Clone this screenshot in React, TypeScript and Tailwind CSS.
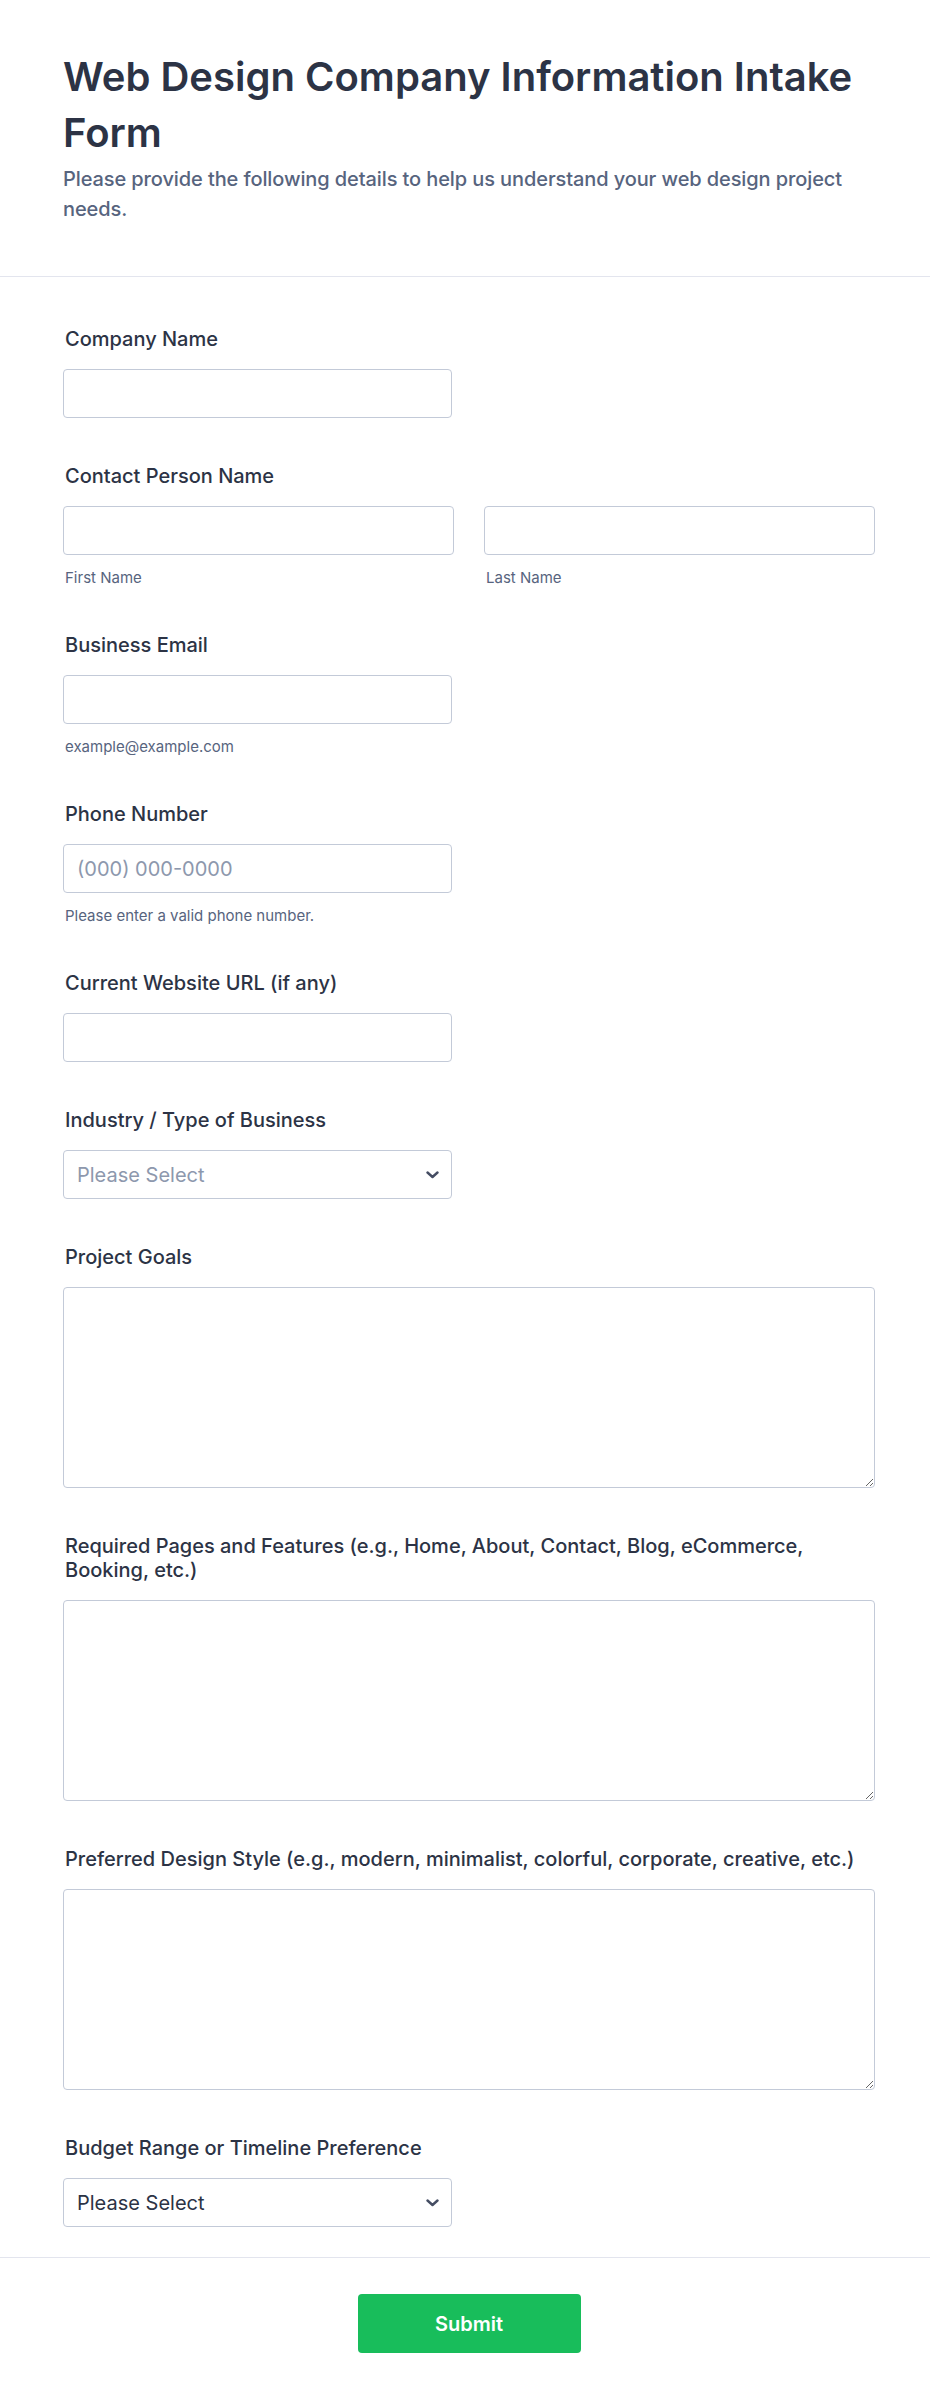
type FieldProps = {
  label: string;
  children: React.ReactNode;
};

const inputClass =
  "block h-[49px] rounded-[4px] border border-[#c3cad8] bg-white px-[13px] text-[20px] text-[#2c3345] outline-none placeholder:text-[#8d98ad]";

const Field = ({ label, children }: FieldProps) => (
  <div className="flex flex-col">
    <label className="pl-[2px] text-[20px] font-medium leading-6 text-[#2c3345]">
      {label}
    </label>
    <div className="mt-[18px]">{children}</div>
  </div>
);

const Sublabel = ({ children }: { children: React.ReactNode }) => (
  <span className="mt-[14px] block pl-[2px] text-[15px] leading-[18px] text-[#57647e]">
    {children}
  </span>
);

const Chevron = () => (
  <svg
    className="pointer-events-none absolute right-[13px] top-1/2 -translate-y-1/2"
    width="13"
    height="8"
    viewBox="0 0 13 8"
    fill="none"
  >
    <path
      d="M1.5 1.5l5 4.5 5-4.5"
      stroke="#454d63"
      strokeWidth="2.4"
      strokeLinecap="round"
      strokeLinejoin="round"
    />
  </svg>
);

const Dropdown = ({ muted }: { muted?: boolean }) => (
  <div className="relative w-[389px]">
    <select
      defaultValue=""
      className={
        "block h-[49px] w-full appearance-none rounded-[4px] border border-[#c3cad8] bg-white px-[13px] text-[20px] outline-none " +
        (muted ? "text-[#8d98ad]" : "text-[#2c3345]")
      }
    >
      <option value="">Please Select</option>
    </select>
    <Chevron />
  </div>
);

const TextArea = () => (
  <textarea className="block h-[201px] w-full rounded-[4px] border border-[#c3cad8] bg-white px-[13px] py-[10px] text-[20px] text-[#2c3345] outline-none" />
);

export default function App() {
  return (
    <div className="min-h-screen bg-white font-['Inter',sans-serif] antialiased">
      <header className="border-b border-[#e3e5ee] pb-[52px] pl-[63px] pr-[55px] pt-[49px]">
        <h1 className="text-[40px] font-semibold leading-[56px] text-[#2c3345]">
          Web Design Company Information Intake Form
        </h1>
        <p className="mt-[3px] text-[20px] font-medium leading-[30px] tracking-[-0.1px] text-[#57647e]">
          Please provide the following details to help us understand your web
          design project needs.
        </p>
      </header>

      <form className="flex flex-col gap-[46px] border-b border-[#e3e5ee] pb-[30px] pl-[63px] pr-[55px] pt-[50px]">
        <Field label="Company Name">
          <input type="text" className={inputClass + " w-[389px]"} />
        </Field>

        <Field label="Contact Person Name">
          <div className="grid grid-cols-2 gap-[30px]">
            <div>
              <input type="text" className={inputClass + " w-full"} />
              <Sublabel>First Name</Sublabel>
            </div>
            <div>
              <input type="text" className={inputClass + " w-full"} />
              <Sublabel>Last Name</Sublabel>
            </div>
          </div>
        </Field>

        <Field label="Business Email">
          <input type="email" className={inputClass + " w-[389px]"} />
          <Sublabel>example@example.com</Sublabel>
        </Field>

        <Field label="Phone Number">
          <input
            type="tel"
            placeholder="(000) 000-0000"
            className={inputClass + " w-[389px]"}
          />
          <Sublabel>Please enter a valid phone number.</Sublabel>
        </Field>

        <Field label="Current Website URL (if any)">
          <input type="url" className={inputClass + " w-[389px]"} />
        </Field>

        <Field label="Industry / Type of Business">
          <Dropdown muted />
        </Field>

        <Field label="Project Goals">
          <TextArea />
        </Field>

        <Field label="Required Pages and Features (e.g., Home, About, Contact, Blog, eCommerce, Booking, etc.)">
          <TextArea />
        </Field>

        <Field label="Preferred Design Style (e.g., modern, minimalist, colorful, corporate, creative, etc.)">
          <TextArea />
        </Field>

        <Field label="Budget Range or Timeline Preference">
          <Dropdown />
        </Field>
      </form>

      <div className="flex justify-center pb-[50px] pl-[63px] pr-[55px] pt-[36px]">
        <button
          type="button"
          className="h-[59px] w-[223px] rounded-[4px] bg-[#18bd5b] text-[20px] font-semibold text-white"
        >
          Submit
        </button>
      </div>
    </div>
  );
}
